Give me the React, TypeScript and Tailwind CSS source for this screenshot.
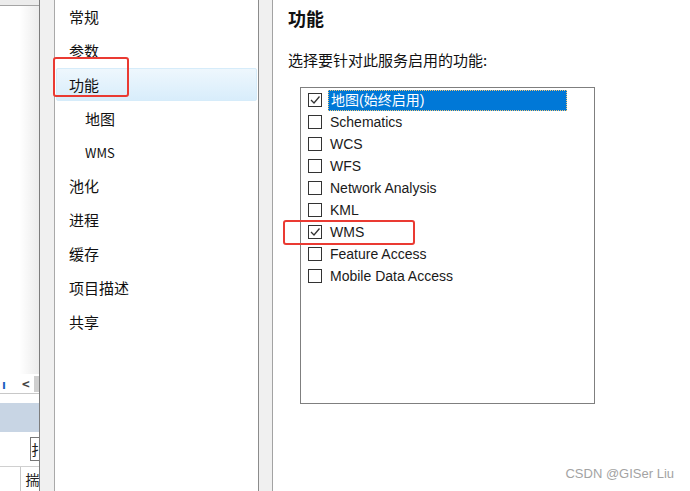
import React from "react";

const font = "font-['Noto_Sans_CJK_SC','Noto_Sans',sans-serif]";

const navItems = [
  { label: "常规", sub: false },
  { label: "参数", sub: false },
  { label: "功能", sub: false, active: true },
  { label: "地图", sub: true },
  { label: "WMS", sub: true, small: true },
  { label: "池化", sub: false },
  { label: "进程", sub: false },
  { label: "缓存", sub: false },
  { label: "项目描述", sub: false },
  { label: "共享", sub: false },
];

const features = [
  { label: "地图(始终启用)", checked: true, selected: true },
  { label: "Schematics" },
  { label: "WCS" },
  { label: "WFS" },
  { label: "Network Analysis" },
  { label: "KML" },
  { label: "WMS", checked: true },
  { label: "Feature Access" },
  { label: "Mobile Data Access" },
];

function Checkbox({ checked }: { checked?: boolean }) {
  return (
    <span className="flex h-[14px] w-[14px] shrink-0 items-center justify-center border border-[#333] bg-white">
      {checked ? (
        <svg width="12" height="12" viewBox="0 0 12 12">
          <polyline
            points="2,6 5,9 10.5,2.5"
            fill="none"
            stroke="#333"
            strokeWidth="1.3"
          />
        </svg>
      ) : null}
    </span>
  );
}

function LeftStrip() {
  return (
    <div className="flex w-[39px] shrink-0 flex-col bg-white">
      <div className="h-[6px] shrink-0 border-b border-[#a5a5a5] bg-[#ececec]" />
      <div className="min-h-0 flex-1 bg-gradient-to-r from-white via-white to-[#ececec]" />
      <div className="flex h-[20px] shrink-0 items-center border-b border-[#c8c8c8] bg-white text-[13px] leading-none">
        <span className="ml-[2px] font-bold text-[#1b5fbf]">ı</span>
        <span className="ml-[16px] font-bold text-[#444]">&lt;</span>
        <span className="ml-auto h-[16px] w-[5px] bg-[#cfcfcf]" />
      </div>
      <div className="h-[9px] shrink-0" />
      <div className="h-[29px] shrink-0 bg-[#c8d5e4]" />
      <div className="flex h-[35px] shrink-0 items-center justify-end border-b border-[#d0d0d0]">
        <span className="flex h-[24px] w-[9px] items-center overflow-hidden border border-r-0 border-[#777] text-[14px] leading-none text-[#222]">
          扌
        </span>
      </div>
      <div className="flex h-[24px] shrink-0">
        <div className="w-[22px] border-r border-[#c8c8c8]" />
        <span className="ml-[4px] overflow-hidden pt-[5px] text-[14px] leading-none text-[#222]">
          揣
        </span>
      </div>
    </div>
  );
}

export default function App() {
  return (
    <div
      className={`relative flex h-[491px] w-[690px] overflow-hidden bg-white text-[#111] ${font}`}
    >
      <LeftStrip />

      <div className="w-[16px] shrink-0 border-x border-l-[#7d7d7d] border-r-[#a9a9a9] bg-[#f0f0f0]" />

      <nav className="w-[203px] shrink-0 bg-white">
        {navItems.map((item) => (
          <div
            key={item.label}
            className={`mx-[1px] flex h-[33.8px] items-center ${
              item.active
                ? "rounded-[2px] border border-[#d6ecfa] bg-gradient-to-b from-[#eef7fd] to-[#d8edfb]"
                : "border border-transparent"
            } ${item.sub ? "pl-[28px]" : "pl-[12px]"}`}
          >
            <span
              className={`${
                item.small ? "text-[13px]" : "text-[15px]"
              } leading-none text-[#111]`}
            >
              {item.label}
            </span>
          </div>
        ))}
      </nav>

      <div className="w-[15px] shrink-0 border-x border-l-[#8b8b8b] border-r-[#a3a3a3] bg-[#f0f0f0]" />

      <main className="relative flex-1 pl-[15px] pt-[8px]">
        <h2 className="text-[18px] font-bold leading-[20px]">功能</h2>
        <p className="mt-[22px] text-[15px] leading-[20px]">
          选择要针对此服务启用的功能:
        </p>

        <div className="ml-[12px] mt-[17px] h-[317px] w-[295px] border border-[#7f7f7f] bg-white pt-[1px]">
          {features.map((f) => (
            <div
              key={f.label}
              className="flex h-[22px] items-center pl-[7px]"
            >
              <Checkbox checked={f.checked} />
              <span
                className={`ml-[6px] flex h-[21px] items-center pl-[2px] font-['Liberation_Sans','Noto_Sans_CJK_SC',sans-serif] text-[14px] leading-none ${
                  f.selected
                    ? "w-[239px] border border-dotted border-[#f2c77a] bg-[#0078d7] text-white"
                    : "text-[#1a1a1a]"
                }`}
              >
                {f.label}
              </span>
            </div>
          ))}
        </div>

        <div className="absolute left-[10px] top-[220px] h-[25px] w-[132px] rounded-[3px] border-2 border-[#ea3a32]" />

        <span className="absolute bottom-[11px] right-[16px] font-['Liberation_Sans',sans-serif] text-[13px] leading-none text-[#a3a3a3]">
          CSDN @GISer Liu
        </span>
      </main>

      <div className="absolute left-[53px] top-[57px] h-[40px] w-[76px] rounded-[3px] border-2 border-[#ea3a32]" />
    </div>
  );
}
